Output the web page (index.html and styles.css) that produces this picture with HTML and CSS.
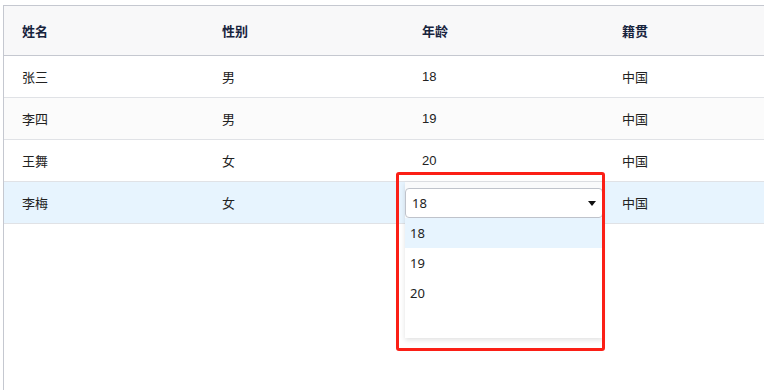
FILE: index.html
```html
<!DOCTYPE html>
<html lang="zh-CN">
<head>
    <meta charset="UTF-8">
    <title>表格编辑</title>
    <link rel="stylesheet" href="styles.css">
</head>
<body>
    <div class="table-wrap">
        <table class="grid">
            <thead>
                <tr>
                    <th>姓名</th>
                    <th>性别</th>
                    <th>年龄</th>
                    <th class="last">籍贯</th>
                </tr>
            </thead>
            <tbody>
                <tr>
                    <td>张三</td>
                    <td>男</td>
                    <td>18</td>
                    <td class="last">中国</td>
                </tr>
                <tr class="stripe">
                    <td>李四</td>
                    <td>男</td>
                    <td>19</td>
                    <td class="last">中国</td>
                </tr>
                <tr>
                    <td>王舞</td>
                    <td>女</td>
                    <td>20</td>
                    <td class="last">中国</td>
                </tr>
                <tr class="current">
                    <td>李梅</td>
                    <td>女</td>
                    <td></td>
                    <td class="last">中国</td>
                </tr>
            </tbody>
        </table>

        <!-- 年龄下拉编辑 -->
        <div class="editor">
            <div class="select-box">
                <span>18</span>
                <span class="arrow"></span>
            </div>
            <ul class="options">
                <li class="active">18</li>
                <li>19</li>
                <li>20</li>
            </ul>
        </div>
        <div class="mark"></div>
    </div>
</body>
</html>
```

FILE: styles.css
```css
html, body {
    margin: 0;
    padding: 0;
    overflow: hidden;
    background: #fff;
}
body {
    font-family: "Liberation Sans", "Noto Sans CJK SC", sans-serif;
    font-size: 13px;
    color: #222;
}
.table-wrap {
    position: relative;
    margin: 5px 0 0 3px;
    height: 385px;
    border-left: 1px solid #c5c8d0;
    border-top: 1px solid #c5c8d0;
}
.grid {
    border-collapse: collapse;
    width: 100%;
    table-layout: fixed;
}
.grid th, .grid td {
    width: 200px;
    padding: 0 18px;
    text-align: left;
    box-sizing: border-box;
}
.grid th.last, .grid td.last {
    width: auto;
}
.grid th {
    height: 49px;
    background: #f8f8f9;
    font-weight: bold;
    color: #17233d;
    border-bottom: 1px solid #c5c8d0;
}
.grid td {
    height: 42px;
    border-bottom: 1px solid #e0e2e6;
}
.grid tr.stripe td {
    background: #fbfbfb;
}
.grid tr.current td {
    background: #e7f4fe;
}
.editor {
    position: absolute;
    left: 401px;
    top: 176px;
    width: 198px;
    height: 156px;
    background: #f9fafb;
    box-shadow: 0 2px 5px rgba(0, 0, 0, 0.12);
    font-family: "Noto Sans", "Noto Sans CJK SC", sans-serif;
}
.select-box {
    display: flex;
    align-items: center;
    justify-content: space-between;
    box-sizing: border-box;
    height: 30px;
    margin-top: 6px;
    padding: 0 6px;
    background: #fff;
    border: 1px solid #bfc3cb;
    border-radius: 4px;
}
.arrow {
    width: 0;
    height: 0;
    border-left: 4px solid transparent;
    border-right: 4px solid transparent;
    border-top: 5px solid #111;
}
.options {
    list-style: none;
    margin: 0;
    padding: 0 0 30px;
    background: #fff;
}
.options li {
    height: 30px;
    line-height: 30px;
    padding: 0 5px;
}
.options li.active {
    background: #e7f4fe;
}
.mark {
    position: absolute;
    left: 392px;
    top: 166px;
    width: 203px;
    height: 173px;
    border: 3px solid #fb1f16;
    border-radius: 3px;
}
```
